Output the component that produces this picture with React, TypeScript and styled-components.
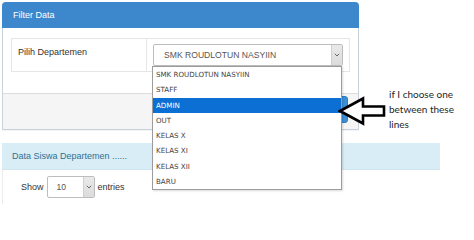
import React from "react";
import styled, { createGlobalStyle } from "styled-components";

const GlobalStyle = createGlobalStyle`
  html, body { margin: 0; padding: 0; background: #ffffff; }
  body { font-family: "Liberation Sans", Arial, sans-serif; color: #333; }
  * { box-sizing: border-box; }
`;

const Page = styled.div`
  position: relative;
  width: 474px;
  height: 232px;
  overflow: hidden;
  padding: 2px 0 0 2px;
`;

const Panel = styled.div<{ $w: number }>`
  width: ${(p) => p.$w}px;
  border: 1px solid #c9d2dc;
  border-radius: 4px 4px 0 0;
  background: #fff;
  box-shadow: 0 1px 1px rgba(0, 0, 0, 0.05);
`;

const PrimaryHeading = styled.div`
  height: 26px;
  margin: -1px -1px 0 -1px;
  background: #3d87cc;
  border-radius: 4px 4px 0 0;
  color: #fff;
  font-size: 9px;
  display: flex;
  align-items: center;
  padding-left: 11px;
`;

const PanelBody = styled.div`
  padding: 10px 8px 21px 8px;
`;

const FormTable = styled.div`
  display: grid;
  grid-template-columns: 135px 1fr;
  border: 1px solid #e6e6e6;
  height: 34px;
`;

const LabelCell = styled.div`
  border-right: 1px solid #e6e6e6;
  padding: 7px 6px 0 6px;
  font-size: 9px;
  line-height: 12px;
  color: #333;
`;

const ValueCell = styled.div`
  padding: 5px 6px;
`;

const SelectBox = styled.div<{ $w?: number }>`
  display: flex;
  height: 22px;
  width: ${(p) => (p.$w ? `${p.$w}px` : "100%")};
  border: 1px solid #bdbdbd;
  border-radius: 2px;
  background: #fff;
  overflow: hidden;
`;

const SelectText = styled.div<{ $pad: number }>`
  flex: 1;
  display: flex;
  align-items: center;
  padding-left: ${(p) => p.$pad}px;
  font-size: 8.6px;
  color: #555;
`;

const SelectArrow = styled.div`
  width: 11px;
  background: linear-gradient(#e9e9e9, #dcdcdc);
  border-left: 1px solid #cfcfcf;
  display: flex;
  align-items: center;
  justify-content: center;
`;

const PanelFooter = styled.div`
  height: 36px;
  background: #f5f5f5;
  border-top: 1px solid #dddddd;
  display: flex;
  justify-content: flex-end;
  align-items: flex-start;
  padding: 2px 10px 0 0;
`;

const Button = styled.div`
  width: 60px;
  height: 27px;
  background: #3d8fd6;
  border: 1px solid #2f7fc4;
  border-radius: 3px;
`;

const InfoPanel = styled.div`
  width: 438px;
  margin-top: 13px;
`;

const InfoHeading = styled.div`
  height: 27px;
  background: #d9edf7;
  border-bottom: 1px solid #cfe6f1;
  color: #31708f;
  font-size: 9px;
  display: flex;
  align-items: center;
  padding-left: 10px;
`;

const InfoBody = styled.div`
  height: 34px;
  border-left: 1px solid #ececec;
  display: flex;
  align-items: center;
  padding-left: 18px;
  gap: 3px;
  font-size: 9px;
  color: #333;
`;

const DropList = styled.ul`
  position: absolute;
  left: 152px;
  top: 66px;
  width: 190px;
  height: 124px;
  margin: 0;
  padding: 0;
  list-style: none;
  background: #fff;
  border: 1px solid #9c9c9c;
  box-shadow: 1px 1px 2px rgba(0, 0, 0, 0.15);
`;

const DropItem = styled.li<{ $active?: boolean }>`
  height: 15.25px;
  display: flex;
  align-items: center;
  padding-left: 3px;
  font-family: "DejaVu Sans", Verdana, sans-serif;
  font-size: 7.1px;
  color: ${(p) => (p.$active ? "#ffffff" : "#444")};
  background: ${(p) => (p.$active ? "#0b6fd3" : "transparent")};
`;

const ArrowMark = styled.svg`
  position: absolute;
  left: 338px;
  top: 96px;
`;

const Note = styled.div`
  position: absolute;
  left: 389px;
  top: 87px;
  font-family: Lato, "Open Sans", sans-serif;
  font-size: 10px;
  line-height: 15px;
  color: #1f1f1f;
`;

const Chevron = () => (
  <svg width="6" height="4" viewBox="0 0 6 4">
    <path d="M0.8 0.8 L3 3 L5.2 0.8" fill="none" stroke="#6a6a6a" strokeWidth="1" />
  </svg>
);

const options = [
  "SMK ROUDLOTUN NASYIIN",
  "STAFF",
  "ADMIN",
  "OUT",
  "KELAS X",
  "KELAS XI",
  "KELAS XII",
  "BARU",
];

export default function App() {
  return (
    <>
      <GlobalStyle />
      <Page>
        <Panel $w={357}>
          <PrimaryHeading>Filter Data</PrimaryHeading>
          <PanelBody>
            <FormTable>
              <LabelCell>Pilih Departemen</LabelCell>
              <ValueCell>
                <SelectBox>
                  <SelectText $pad={10}>SMK ROUDLOTUN NASYIIN</SelectText>
                  <SelectArrow>
                    <Chevron />
                  </SelectArrow>
                </SelectBox>
              </ValueCell>
            </FormTable>
          </PanelBody>
          <PanelFooter>
            <Button />
          </PanelFooter>
        </Panel>

        <InfoPanel>
          <InfoHeading>Data Siswa Departemen ......</InfoHeading>
          <InfoBody>
            <span>Show</span>
            <SelectBox $w={48}>
              <SelectText $pad={9}>10</SelectText>
              <SelectArrow>
                <Chevron />
              </SelectArrow>
            </SelectBox>
            <span>entries</span>
          </InfoBody>
        </InfoPanel>

        <DropList>
          {options.map((o) => (
            <DropItem key={o} $active={o === "ADMIN"}>
              {o}
            </DropItem>
          ))}
        </DropList>

        <ArrowMark width="50" height="30" viewBox="0 0 50 30">
          <path
            d="M2 15 L25 2.5 L25 10.5 L46 10.5 L46 19.5 L25 19.5 L25 27.5 Z"
            fill="#ffffff"
            stroke="#000000"
            strokeWidth="2.6"
            strokeLinejoin="miter"
          />
        </ArrowMark>

        <Note>
          if I choose one
          <br />
          between these
          <br />
          lines
        </Note>
      </Page>
    </>
  );
}
